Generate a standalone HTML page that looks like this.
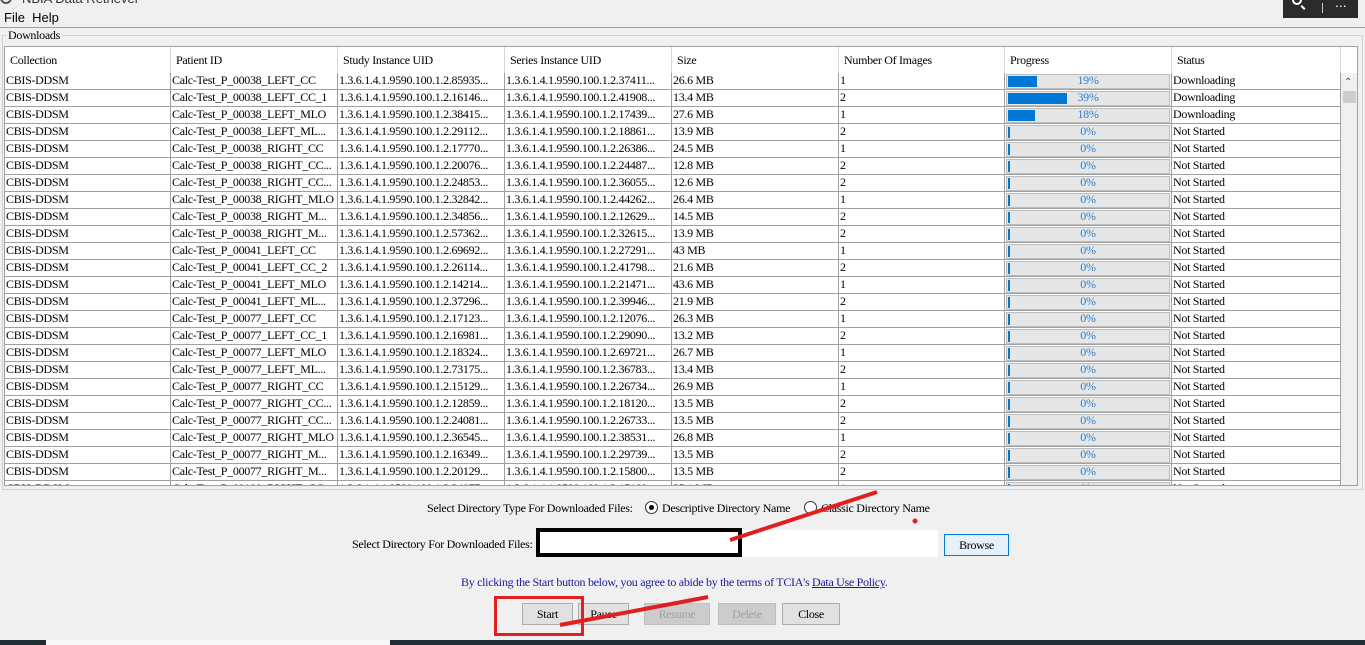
<!DOCTYPE html>
<html><head><meta charset="utf-8"><style>
*{margin:0;padding:0;box-sizing:border-box}
body{width:1365px;height:645px;background:#f0f0f0;position:relative;overflow:hidden;font-family:"Liberation Serif",serif;font-size:12px;color:#000;letter-spacing:-0.3px}
.a{position:absolute;white-space:nowrap}
.ui{font-family:"Liberation Sans",sans-serif;font-size:12px;letter-spacing:0}
#tbl{position:absolute;left:4px;top:46px;width:1354px;height:440px;border:1px solid #a0a0a0;background:#fff;overflow:hidden}
.hd{position:absolute;top:0;height:26px;border-right:1px solid #d8d8d8;background:#fff;padding:6px 0 0 5px}
.row{position:absolute;left:0;width:1336px;height:17px}
.c{position:absolute;top:0;height:17px;border-right:1px solid #a0a0a0;border-bottom:1px solid #a0a0a0;padding:0 0 0 1px;overflow:hidden;white-space:nowrap}
.pb{position:absolute;top:1px;left:1px;right:1px;height:15px;background:#e6e6e6;border:1px solid #bcbcbc}
.pf{position:absolute;left:1px;top:1px;height:11px;background:#0078d7}
.pt{position:absolute;left:0;right:0;top:-2px;text-align:center;color:#2a7fd0}
.btn{position:absolute;height:22px;border:1px solid #adadad;background:#e1e1e1;text-align:center;padding-top:3px}
.dis{color:#a0a0a0;background:#cccccc;border-color:#bfbfbf}
</style></head><body>
<div class="a" style="left:0;top:-8px;width:12px;height:12px;border-radius:50%;border:2px solid #555"></div>
<div class="a ui" style="left:22px;top:-9px;font-size:13px;color:#333">NBIA Data Retriever</div>
<div class="a" style="left:1283px;top:0;width:75px;height:18px;background:#2b2b2b"></div>
<div class="a" style="left:1322px;top:3px;width:1px;height:10px;background:#ccc"></div>
<div class="a ui" style="left:1335px;top:-6px;color:#fff;font-size:14px">...</div>
<div class="a" style="left:1292px;top:-5px;width:10px;height:10px;border:2px solid #fff;border-radius:50%"></div>
<div class="a" style="left:1302px;top:5px;width:2px;height:5px;background:#fff;transform:rotate(-45deg)"></div>
<div class="a ui" style="left:4px;top:10px;font-size:13px">File&nbsp;&nbsp;Help</div>
<div class="a" style="left:0;top:27px;width:1365px;height:1px;background:#a0a0a0"></div>
<div class="a" style="left:2px;top:35px;width:1361px;height:455px;border:1px solid #d0d0d0"></div>
<div class="a" style="left:6px;top:28px;background:#f0f0f0;padding:0 2px">Downloads</div>
<div id="tbl"></div>
<div class="a" style="left:427px;top:501px">Select Directory Type For Downloaded Files:</div>
<div class="a" style="left:645px;top:501px;width:13px;height:13px;border:1px solid #333;border-radius:50%;background:#fff"></div>
<div class="a" style="left:649px;top:505px;width:5px;height:5px;border-radius:50%;background:#000"></div>
<div class="a" style="left:662px;top:501px">Descriptive Directory Name</div>
<div class="a" style="left:804px;top:501px;width:13px;height:13px;border:1px solid #333;border-radius:50%;background:#fff"></div>
<div class="a" style="left:821px;top:501px">Classic Directory Name</div>
<div class="a" style="left:352px;top:537px">Select Directory For Downloaded Files:</div>
<div class="a" style="left:536px;top:530px;width:402px;height:27px;background:#fff"></div>
<div class="a" style="left:536px;top:528px;width:206px;height:29px;border:4px solid #000;background:#fff"></div>
<div class="btn" style="left:944px;top:534px;width:65px;border:1px solid #0078d7;background:#e5f1fb">Browse</div>
<div class="a" style="left:461px;top:575px;color:#1a1a9a">By clicking the Start button below, you agree to abide by the terms of TCIA's <u>Data Use Policy</u>.</div>
<div class="btn" style="left:522px;top:603px;width:51px">Start</div>
<div class="btn" style="left:578px;top:603px;width:51px">Pause</div>
<div class="btn dis" style="left:644px;top:603px;width:66px">Resume</div>
<div class="btn dis" style="left:718px;top:603px;width:58px">Delete</div>
<div class="btn" style="left:782px;top:603px;width:58px">Close</div>
<div class="a" style="left:494px;top:596px;width:90px;height:40px;border:3px solid #e02020"></div>
<svg class="a" style="left:0;top:0" width="1365" height="645"><line x1="877" y1="492" x2="730" y2="540" stroke="#e02020" stroke-width="4"/><line x1="708" y1="597" x2="560" y2="625" stroke="#e02020" stroke-width="4"/><circle cx="915" cy="521" r="2.5" fill="#e02020"/></svg>
<div class="a" style="left:0;top:640px;width:46px;height:5px;background:#1f2d33"></div>
<div class="a" style="left:46px;top:640px;width:344px;height:5px;background:#f8f8f8"></div>
<div class="a" style="left:390px;top:640px;width:975px;height:5px;background:#1f2d33"></div>
<script>
var X=[0,166,333,500,667,834,1000,1167,1336];
var H=["Collection","Patient ID","Study Instance UID","Series Instance UID","Size","Number Of Images","Progress","Status"];
var R=[["LEFT_CC","85935","37411","26.6 MB",1,19],["LEFT_CC_1","16146","41908","13.4 MB",2,39],["LEFT_MLO","38415","17439","27.6 MB",1,18],["LEFT_ML...","29112","18861","13.9 MB",2],["RIGHT_CC","17770","26386","24.5 MB",1],["RIGHT_CC...","20076","24487","12.8 MB",2],["RIGHT_CC...","24853","36055","12.6 MB",2],["RIGHT_MLO","32842","44262","26.4 MB",1],["RIGHT_M...","34856","12629","14.5 MB",2],["RIGHT_M...","57362","32615","13.9 MB",2],
["LEFT_CC","69692","27291","43 MB",1,0,"00041"],["LEFT_CC_2","26114","41798","21.6 MB",2,0,"00041"],["LEFT_MLO","14214","21471","43.6 MB",1,0,"00041"],["LEFT_ML...","37296","39946","21.9 MB",2,0,"00041"],
["LEFT_CC","17123","12076","26.3 MB",1,0,"00077"],["LEFT_CC_1","16981","29090","13.2 MB",2,0,"00077"],["LEFT_MLO","18324","69721","26.7 MB",1,0,"00077"],["LEFT_ML...","73175","36783","13.4 MB",2,0,"00077"],["RIGHT_CC","15129","26734","26.9 MB",1,0,"00077"],["RIGHT_CC...","12859","18120","13.5 MB",2,0,"00077"],["RIGHT_CC...","24081","26733","13.5 MB",2,0,"00077"],["RIGHT_MLO","36545","38531","26.8 MB",1,0,"00077"],["RIGHT_M...","16349","29739","13.5 MB",2,0,"00077"],["RIGHT_M...","20129","15800","13.5 MB",2,0,"00077"],["RIGHT_CC","24077","15100","25.1 MB",1,0,"00100"]];
var h="";
for(var i=0;i<8;i++)h+='<div class="hd" style="left:'+X[i]+'px;width:'+(X[i+1]-X[i])+'px">'+H[i]+'</div>';
R.forEach(function(r,k){var p=r[5]||0,st=p?"Downloading":"Not Started";
var v=["CBIS-DDSM","Calc-Test_P_"+(r[6]||"00038")+"_"+r[0],"1.3.6.1.4.1.9590.100.1.2."+r[1]+"...","1.3.6.1.4.1.9590.100.1.2."+r[2]+"...",r[3],r[4],"",st];
h+='<div class="row" style="top:'+(26+k*17)+'px">';
for(var i=0;i<8;i++){var c=v[i];if(i==6)c='<div class="pb"><div class="pf" style="width:'+(p?Math.round(p*1.5):2)+'px"></div><div class="pt">'+p+'%</div></div>';
h+='<div class="c" style="left:'+X[i]+'px;width:'+(X[i+1]-X[i])+'px">'+c+'</div>';}
h+='</div>';});
h+='<div style="position:absolute;left:1336px;top:26px;width:17px;height:420px;background:#f0f0f0"></div><div style="position:absolute;left:1339px;top:30px;font-size:10px;color:#555">&#8963;</div><div style="position:absolute;left:1338px;top:44px;width:13px;height:12px;background:#cdcdcd"></div>';
document.getElementById("tbl").innerHTML=h;
</script>
</body></html>
